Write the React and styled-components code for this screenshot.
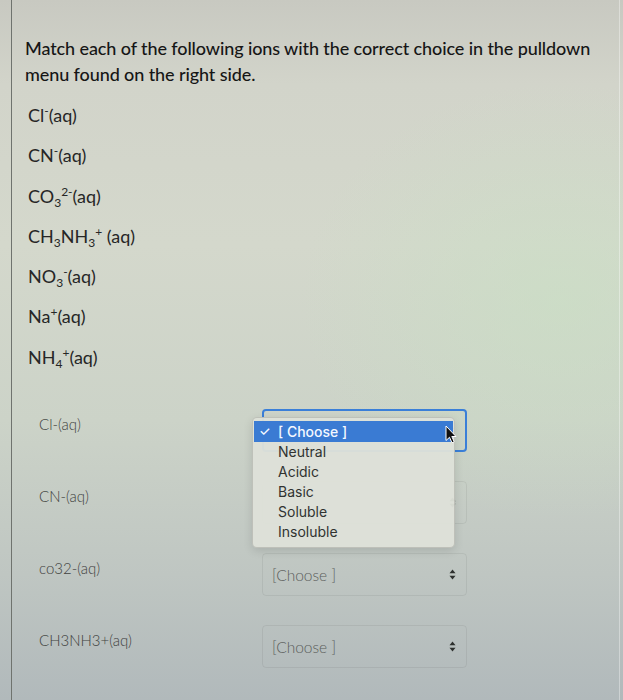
import React from "react";
import styled, { createGlobalStyle } from "styled-components";

const GlobalStyle = createGlobalStyle`
  html, body {
    margin: 0;
    padding: 0;
    background: #c9cdc4;
  }
`;

const Page = styled.div`
  position: relative;
  width: 623px;
  height: 700px;
  overflow: hidden;
  background:
    radial-gradient(ellipse 260px 220px at 560px 300px, rgba(200, 225, 195, 0.55), transparent),
    linear-gradient(180deg, #c8c9c1 0%, #d2d4ca 12%, #d4d8cc 35%, #ccd3c8 60%, #bfc6c2 82%, #b1b9bb 100%);
  font-family: Lato, "Open Sans", sans-serif;
`;

const Panel = styled.div`
  margin-left: 11px;
  margin-right: 3px;
  height: 100%;
  border-left: 1px solid #6f736e;
  border-right: 1px solid rgba(255, 255, 255, 0.35);
  padding-top: 35px;
  box-sizing: border-box;
`;

const Heading = styled.p`
  margin: 0;
  padding-left: 13px;
  max-width: 580px;
  font-size: 18px;
  line-height: 26px;
  font-weight: 500;
  letter-spacing: -0.1px;
  color: #161616;
`;

const IonList = styled.ul`
  list-style: none;
  margin: 8px 0 0;
  padding: 0 0 0 16px;
`;

const Ion = styled.li`
  font-size: 18px;
  line-height: 40.3px;
  color: #262626;

  sub, sup {
    font-size: 12px;
    line-height: 0;
  }
  sub {
    vertical-align: -4px;
  }
  sup {
    vertical-align: 7px;
  }
`;

const Matches = styled.div`
  margin-top: 32px;
  padding-left: 27px;
  display: flex;
  flex-direction: column;
`;

const Row = styled.div`
  display: grid;
  grid-template-columns: 223px 205px;
  height: 72px;
  align-items: start;
`;

const Label = styled.div`
  padding-top: 7px;
  font-size: 15px;
  line-height: 16px;
  font-weight: 300;
  color: #3f4240;
`;

const SelectBox = styled.div`
  position: relative;
  height: 43px;
  box-sizing: border-box;
  display: flex;
  align-items: center;
  justify-content: space-between;
  padding: 0 10px 0 9px;
  border-radius: 4px;
  border: ${(p) => (p.focused ? "2.5px solid #3a7fd8" : "1px solid rgba(0, 0, 0, 0.06)")};
  font-size: 15.5px;
  font-weight: 300;
  color: #5b5e5c;
`;

const Value = styled.span`
  visibility: ${(p) => (p.covered ? "hidden" : "visible")};
`;

const Arrows = styled.svg`
  width: 7px;
  height: 11px;
  flex-shrink: 0;
`;

const Menu = styled.div`
  position: absolute;
  left: -12px;
  top: 6px;
  width: 203px;
  padding: 3px 0 5px;
  box-sizing: border-box;
  background: rgba(222, 225, 217, 0.96);
  border: 1px solid rgba(0, 0, 0, 0.14);
  border-radius: 5px;
  box-shadow: 0 3px 10px rgba(0, 0, 0, 0.12);
  font-family: Inter, "Noto Sans", sans-serif;
  z-index: 2;
`;

const Option = styled.div`
  position: relative;
  height: ${(p) => (p.active ? "21px" : "20px")};
  line-height: ${(p) => (p.active ? "21px" : "20px")};
  padding-left: 24px;
  margin: 0 1px;
  font-size: 14px;
  font-weight: ${(p) => (p.active ? 500 : 400)};
  color: ${(p) => (p.active ? "#f4f8ff" : "#303331")};
  background: ${(p) => (p.active ? "#3a7bd3" : "transparent")};
`;

const Check = styled.span`
  position: absolute;
  left: 5px;
  top: 0;
  font-size: 13px;
`;

const Cursor = styled.svg`
  position: absolute;
  right: 8px;
  top: 14px;
  width: 12px;
  height: 19px;
  z-index: 3;
`;

const UpDown = () => (
  <Arrows viewBox="0 0 7 11">
    <path d="M3.5 0.5 L6.5 4.2 L0.5 4.2 Z" fill="#2d302e" />
    <path d="M3.5 10.5 L6.5 6.8 L0.5 6.8 Z" fill="#2d302e" />
  </Arrows>
);

const ions = [
  <>Cl<sup>-</sup>(aq)</>,
  <>CN<sup>-</sup>(aq)</>,
  <>CO<sub>3</sub><sup>2-</sup>(aq)</>,
  <>CH<sub>3</sub>NH<sub>3</sub><sup>+</sup> (aq)</>,
  <>NO<sub>3</sub><sup>-</sup>(aq)</>,
  <>Na<sup>+</sup>(aq)</>,
  <>NH<sub>4</sub><sup>+</sup>(aq)</>,
];

const options = ["Neutral", "Acidic", "Basic", "Soluble", "Insoluble"];

const rows = ["Cl-(aq)", "CN-(aq)", "co32-(aq)", "CH3NH3+(aq)"];

export default function App() {
  return (
    <>
      <GlobalStyle />
      <Page>
        <Panel>
          <Heading>
            Match each of the following ions with the correct choice in the pulldown menu found on the right side.
          </Heading>
          <IonList>
            {ions.map((ion, i) => (
              <Ion key={i}>{ion}</Ion>
            ))}
          </IonList>
          <Matches>
            {rows.map((label, i) => (
              <Row key={label}>
                <Label>{label}</Label>
                <SelectBox focused={i === 0}>
                  <Value covered={i < 2}>[Choose ]</Value>
                  <UpDown />
                  {i === 0 && (
                    <>
                      <Menu>
                        <Option active>
                          <Check>✓</Check>[ Choose ]
                        </Option>
                        {options.map((o) => (
                          <Option key={o}>{o}</Option>
                        ))}
                      </Menu>
                      <Cursor viewBox="0 0 12 19">
                        <path
                          d="M1 1 L1 15.5 L4.5 12.3 L7 17.8 L9.2 16.8 L6.8 11.5 L11 11.5 Z"
                          fill="#111"
                          stroke="#fff"
                          strokeWidth="1"
                          strokeLinejoin="round"
                        />
                      </Cursor>
                    </>
                  )}
                </SelectBox>
              </Row>
            ))}
          </Matches>
        </Panel>
      </Page>
    </>
  );
}
